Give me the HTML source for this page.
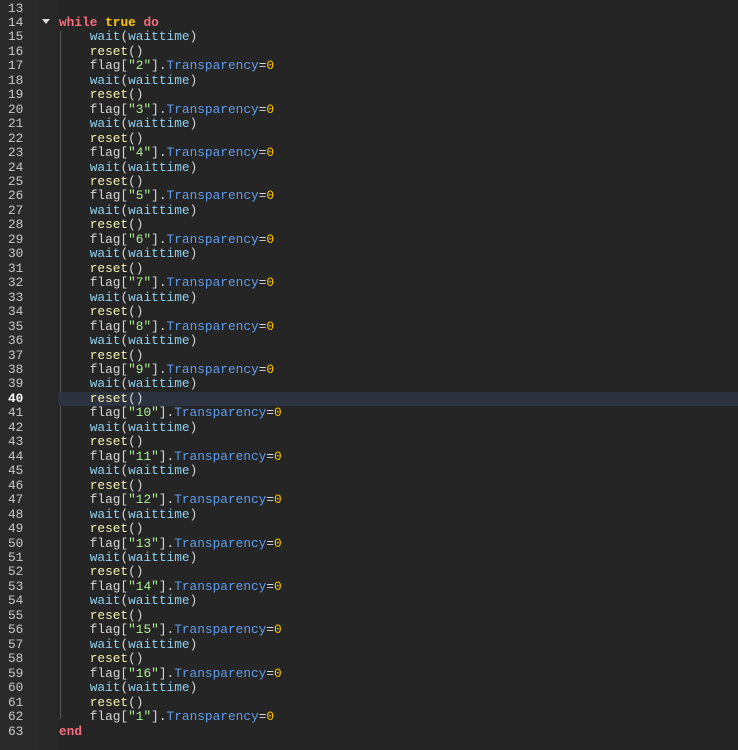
<!DOCTYPE html><html><head><style>
body{margin:0;width:738px;height:750px;background:#252525;overflow:hidden;font-family:"Liberation Mono",monospace;font-size:12.8px}
#g{position:absolute;left:0;top:0;width:38px;height:750px;background:#2a2a2a}
#g2{position:absolute;left:38px;top:0;width:20px;height:750px;background:#272727}
.l{position:absolute;left:0;height:14.46px;line-height:14.46px;white-space:pre;width:738px}
.n{position:absolute;left:8px;color:#c8c8c8}
.c{position:absolute;left:59px;color:#d8d8d8}
.k{color:#f86d7c;font-weight:bold}.t{color:#ffc600;font-weight:bold}
.f{color:#8fd0ee}.r{color:#f5f2b0}.s{color:#adf195}.p{color:#5f9ded}.o{color:#ffc600}
.hl{position:absolute;left:58px;width:680px;height:14.46px;background:#2d3240}
#guide{position:absolute;left:60px;top:31px;width:1px;height:688px;background:#555}
</style></head><body><div id="g"></div><div id="g2"></div><div id="guide"></div>
<div id="code"></div>
<script>
var h='',top0=1.5,lh=14.46;
function L(i,n,c){var y=(top0+i*lh).toFixed(2);h+='<div class="l" style="top:'+y+'px">'+(n==40?'<div class="hl"></div>':'')+'<span class="n"'+(n==40?' style="color:#fff;font-weight:bold"':'')+'>'+n+'</span><span class="c">'+c+'</span></div>';}
var lines=['', '<span class="k">while</span> <span class="t">true</span> <span class="k">do</span>'];
var order=[2,3,4,5,6,7,8,9,10,11,12,13,14,15,16,1];
order.forEach(function(k){lines.push('    <span class="f">wait</span>(<span class="f">waittime</span>)');lines.push('    <span class="r">reset</span>()');lines.push('    flag[<span class="s">"'+k+'"</span>].<span class="p">Transparency</span>=<span class="o">0</span>');});
lines.push('<span class="k">end</span>');
lines.forEach(function(c,i){L(i,13+i,c);});
document.getElementById('code').innerHTML=h;
</script>
<div style="position:absolute;left:42px;top:19px;width:0;height:0;border-left:4px solid transparent;border-right:4px solid transparent;border-top:5px solid #ddd"></div>
</body></html>
